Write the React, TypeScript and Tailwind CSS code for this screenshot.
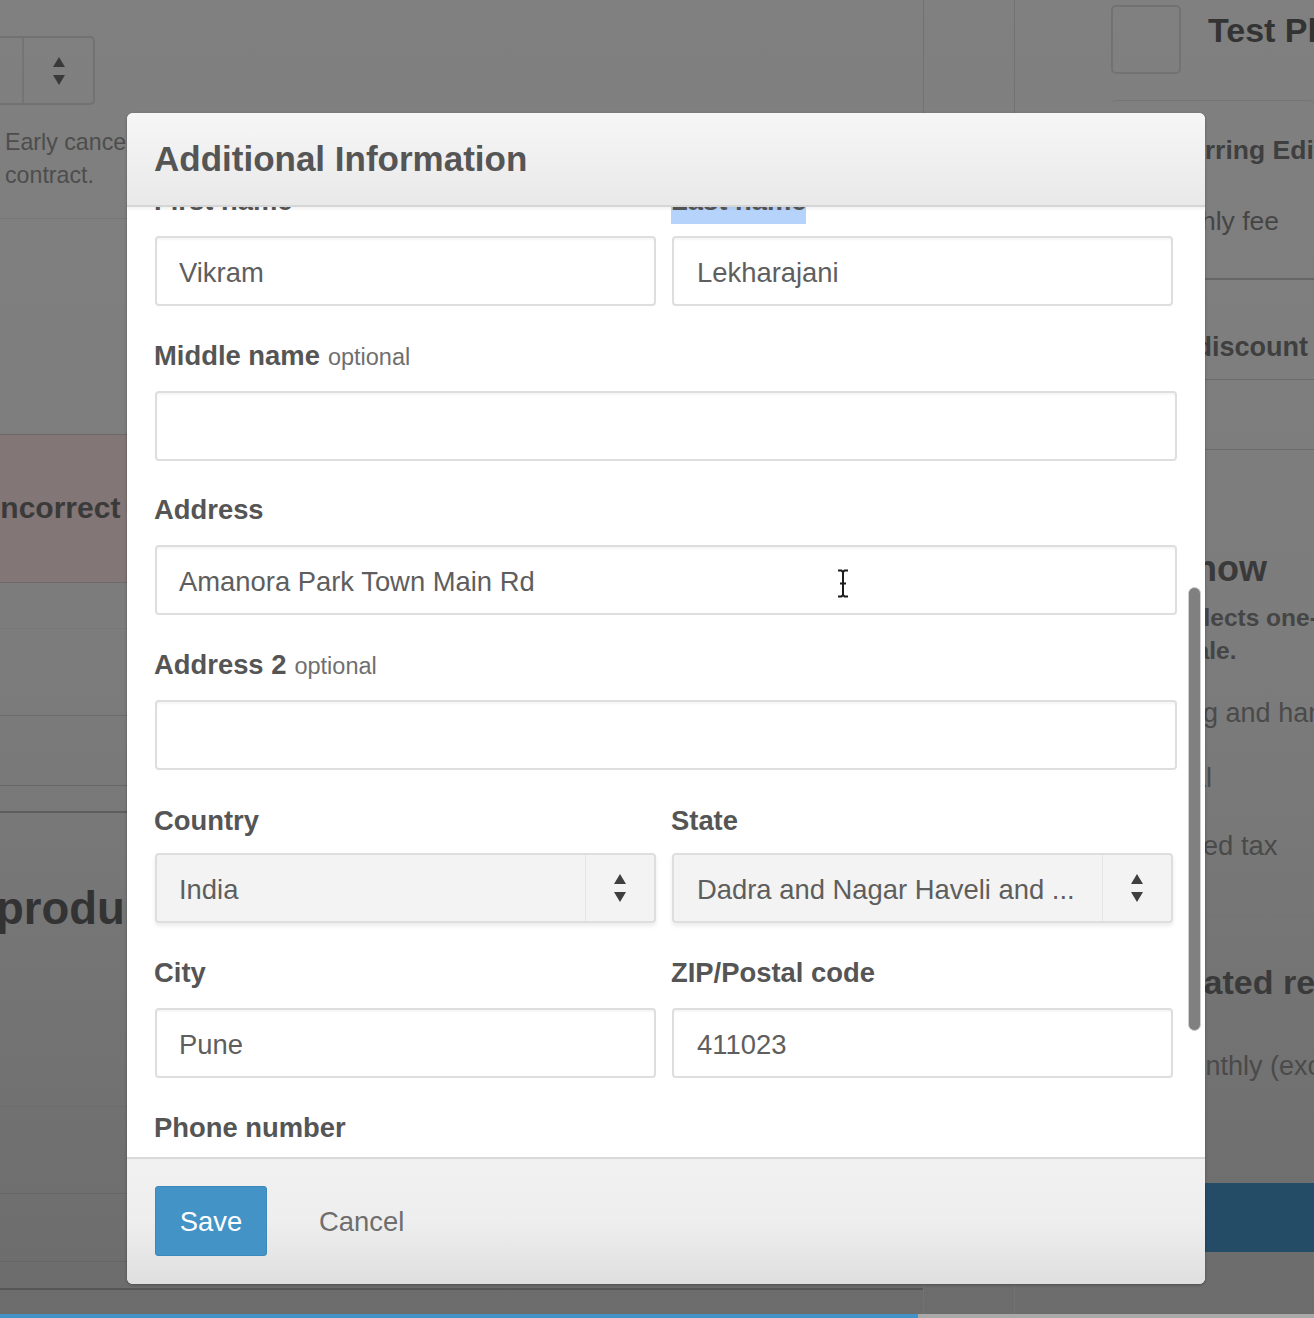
const font = { fontFamily: '"Liberation Sans", Arial, sans-serif' }

function Arrows({ fill = "#4a4a4a" }: { fill?: string }) {
  return (
    <svg width="14" height="28" viewBox="0 0 14 28" fill={fill}>
      <path d="M7 0 L13 10 H1 Z" />
      <path d="M1 18 H13 L7 28 Z" />
    </svg>
  )
}

function Label({ text, optional }: { text: string; optional?: boolean }) {
  return (
    <label className="block h-[40px] pt-px text-[27.4px] leading-[40px] font-bold text-[#555555]">
      {text}
      {optional && <span className="ml-2 text-[23.5px] font-normal text-[#6f6f6f]">optional</span>}
    </label>
  )
}

function TextInput({ value, wide, right }: { value?: string; wide?: boolean; right?: boolean }) {
  return (
    <div
      className={`mt-[16px] ml-px flex h-[70px] items-center rounded-[4px] border-2 border-[#dedede] bg-white pt-[3px] text-[27.4px] text-[#5e5e5e] shadow-[inset_0_2px_2px_rgba(0,0,0,0.04)] ${
        wide ? "w-[1022px]" : "w-[501px]"
      } ${right ? "pl-[23px]" : "pl-[22px]"}`}
    >
      {value}
    </div>
  )
}

function SelectBox({ value, right }: { value: string; right?: boolean }) {
  return (
    <div className="mt-[13px] ml-px flex h-[70px] w-[501px] items-center rounded-[4px] border-2 border-[#dedede] bg-[#f3f3f3] text-[27.4px] text-[#5e5e5e] shadow-[0_3px_4px_rgba(0,0,0,0.08)]">
      <span className={`flex-1 pt-[3px] whitespace-nowrap ${right ? "pl-[23px]" : "pl-[22px]"}`}>{value}</span>
      <span className="flex h-full w-[69px] shrink-0 items-center justify-center border-l border-[#e4e4e4]">
        <Arrows fill="#3f3f3f" />
      </span>
    </div>
  )
}

function Background() {
  return (
    <div className="flex h-[1314px] bg-gradient-to-b from-[#808080] via-[#7c7c7c] to-[#6c6c6c] text-[#3a3a3a]">
      {/* left column */}
      <div className="flex w-[924px] shrink-0 flex-col border-r border-[#727272]">
        <div className="h-[219px] border-b border-[#767676] pt-[36px]">
          <div className="flex h-[69px] w-[95px] rounded-r-[5px] border-y-2 border-r-2 border-[#727272]">
            <div className="w-[24px] border-r-2 border-[#747474]" />
            <div className="flex flex-1 items-center justify-center">
              <Arrows fill="#3a3a3a" />
            </div>
          </div>
          <p className="mt-[21px] pl-[5px] text-[23.2px] leading-[33px] whitespace-nowrap text-[#4d4d4d]">
            Early cancellation fee applies
            <br />
            contract.
          </p>
        </div>
        <div className="h-[215px]" />
        <div className="flex h-[149px] items-center border-y border-[#6e6868] bg-[#827676] pb-[2px] text-[30px] font-bold">
          <span className="-ml-[8px]">Incorrect</span>
        </div>
        <div className="h-[46px] border-b border-[#787878]" />
        <div className="h-[87px] border-b border-[#6c6c6c]" />
        <div className="h-[70px] border-b border-[#666666]" />
        <div className="h-[27px] border-b-2 border-[#5e5e5e]" />
        <div className="h-[190px] pt-[66px] text-[45.5px] leading-[60px] font-bold text-[#333333]">
          <span className="-ml-[4px]">produ</span>
        </div>
        <div className="h-[104px] border-b border-[#6c6c6c]" />
        <div className="h-[87px] border-b border-[#666666]" />
        <div className="h-[68px] border-b border-[#646464]" />
        <div className="h-[28px] border-b-2 border-[#565656]" />
      </div>

      {/* middle column */}
      <div className="w-[91px] shrink-0 border-r border-[#727272]" />

      {/* right column */}
      <div className="min-w-0 flex-1 overflow-hidden pl-[96px]">
        <div className="flex h-[100px] pt-[5px]">
          <div className="h-[69px] w-[70px] shrink-0 rounded-[5px] border-2 border-[#727272]" />
          <h2 className="mt-[5px] ml-[27px] text-[34px] leading-[40px] font-bold whitespace-nowrap text-[#333333]">
            Test Plan
          </h2>
        </div>
        <div className="h-[180px] rounded-t-[5px] border-t border-b-2 border-[#757575] border-b-[#666666] pl-[29px]">
          <p className="pt-[29px] text-[26.5px] leading-[40px] font-bold whitespace-nowrap text-[#3f3f3f]">Recurring Edit</p>
          <p className="mt-[31px] pl-[2px] text-[26.5px] leading-[40px] whitespace-nowrap text-[#454545]">Monthly fee</p>
        </div>
        <div className="h-[100px] border-b border-[#6c6c6c]">
          <p className="pt-[47px] pl-[11px] text-[27px] leading-[40px] font-bold whitespace-nowrap text-[#3f3f3f]">Early discount</p>
        </div>
        <div className="h-[70px] border-b border-[#6c6c6c]" />
        <div className="h-[466px] border-b border-[#747474] pl-[58px]">
          <p className="pt-[97px] text-[36px] leading-[44px] font-bold whitespace-nowrap text-[#3a3a3a]">Know</p>
          <p className="mt-[10px] -ml-[5px] text-[24.5px] leading-[33px] font-bold whitespace-nowrap text-[#454545]">
            Collects one-
            <br />
            <span className="ml-[18px]">sale.</span>
          </p>
          <p className="mt-[28px] -ml-[56px] text-[27px] leading-[36px] whitespace-nowrap text-[#4a4a4a]">Shipping and handling</p>
          <p className="mt-[29px] -ml-[14px] text-[27px] leading-[36px] whitespace-nowrap text-[#4a4a4a]">Total</p>
          <p className="mt-[32px] -ml-[58px] text-[27.5px] leading-[36px] whitespace-nowrap text-[#4a4a4a]">Estimated tax</p>
        </div>
        <p className="pt-[44px] text-[34px] leading-[44px] font-bold whitespace-nowrap text-[#3a3a3a]">Estimated recurring</p>
        <p className="mt-[44px] pl-[57px] text-[27px] leading-[36px] whitespace-nowrap text-[#4a4a4a]">Monthly (excl. tax)</p>
        <div className="mt-[99px] h-[69px] bg-[#244c66]" />
      </div>
    </div>
  )
}

export default function App() {
  return (
    <div className="relative h-[1318px] w-[1314px] overflow-hidden bg-[#6c6c6c]" style={font}>
      <Background />
      <div className="flex h-[4px]">
        <div className="w-[918px] bg-[#4393c6]" />
        <div className="flex-1 bg-[#a9a9a9]" />
      </div>

      {/* modal */}
      <div className="absolute top-[113px] left-[127px] flex h-[1171px] w-[1078px] flex-col overflow-hidden rounded-[6px] bg-white shadow-[0_1px_3px_rgba(0,0,0,0.3)]">
        <header className="relative z-10 flex h-[94px] shrink-0 items-center border-b-2 border-[#d6d6d6] bg-gradient-to-b from-[#f6f6f6] to-[#e9e9e9] pl-[27px] shadow-[0_2px_3px_rgba(0,0,0,0.06)]">
          <h1 className="text-[35px] leading-[44px] font-bold text-[#555555]">Additional Information</h1>
        </header>

        <div className="relative flex-1 overflow-hidden pl-[27px]">
          <div className="-mt-[27px] flex flex-col">
            <div className="flex gap-[15px]">
              <div>
                <Label text="First name" />
                <TextInput value="Vikram" />
              </div>
              <div>
                <label className="block h-[40px] pt-px text-[27.4px] leading-[40px] font-bold text-[#555555]">
                  <span className="inline-block bg-[#b6d4fb] pb-[3px]">Last name</span>
                </label>
                <TextInput value="Lekharajani" right />
              </div>
            </div>

            <div className="mt-[29px]">
              <Label text="Middle name" optional />
              <TextInput wide />
            </div>
            <div className="mt-[28px]">
              <Label text="Address" />
              <TextInput wide value="Amanora Park Town Main Rd" />
            </div>
            <div className="mt-[29px]">
              <Label text="Address 2" optional />
              <TextInput wide />
            </div>

            <div className="mt-[30px] flex gap-[15px]">
              <div>
                <Label text="Country" />
                <SelectBox value="India" />
              </div>
              <div>
                <Label text="State" />
                <SelectBox value="Dadra and Nagar Haveli and ..." right />
              </div>
            </div>

            <div className="mt-[29px] flex gap-[15px]">
              <div>
                <Label text="City" />
                <TextInput value="Pune" />
              </div>
              <div>
                <Label text="ZIP/Postal code" />
                <TextInput value="411023" right />
              </div>
            </div>

            <div className="mt-[29px]">
              <Label text="Phone number" />
              <TextInput wide />
            </div>
          </div>

          {/* scrollbar thumb */}
          <div className="absolute top-[380px] right-[4px] h-[444px] w-[13px] rounded-full border border-[#cfcfcf] bg-[#808080]" />
        </div>

        <footer className="flex h-[127px] shrink-0 items-center gap-[52px] border-t-2 border-[#d9d9d9] bg-gradient-to-b from-[#f1f1f1] via-[#eeeeee] to-[#dfdfdf] pb-[2px] pl-[27px]">
          <button className="ml-px h-[70px] w-[112px] rounded-[3px] border border-[#3b88ba] bg-[#4393c6] pt-[3px] text-[27.4px] text-white">
            Save
          </button>
          <a className="pt-[3px] text-[27.4px] text-[#6e6e6e]">Cancel</a>
        </footer>
      </div>

      {/* text cursor */}
      <svg className="absolute top-[569px] left-[836px]" width="14" height="29" viewBox="0 0 14 29" fill="none">
        <path d="M2 1.5 H5.5 L7 3 L8.5 1.5 H12 M7 3 V26 M2 27.5 H5.5 L7 26 L8.5 27.5 H12 M4 14.5 H10" stroke="#1c1c1c" strokeWidth="2" />
      </svg>
    </div>
  )
}
